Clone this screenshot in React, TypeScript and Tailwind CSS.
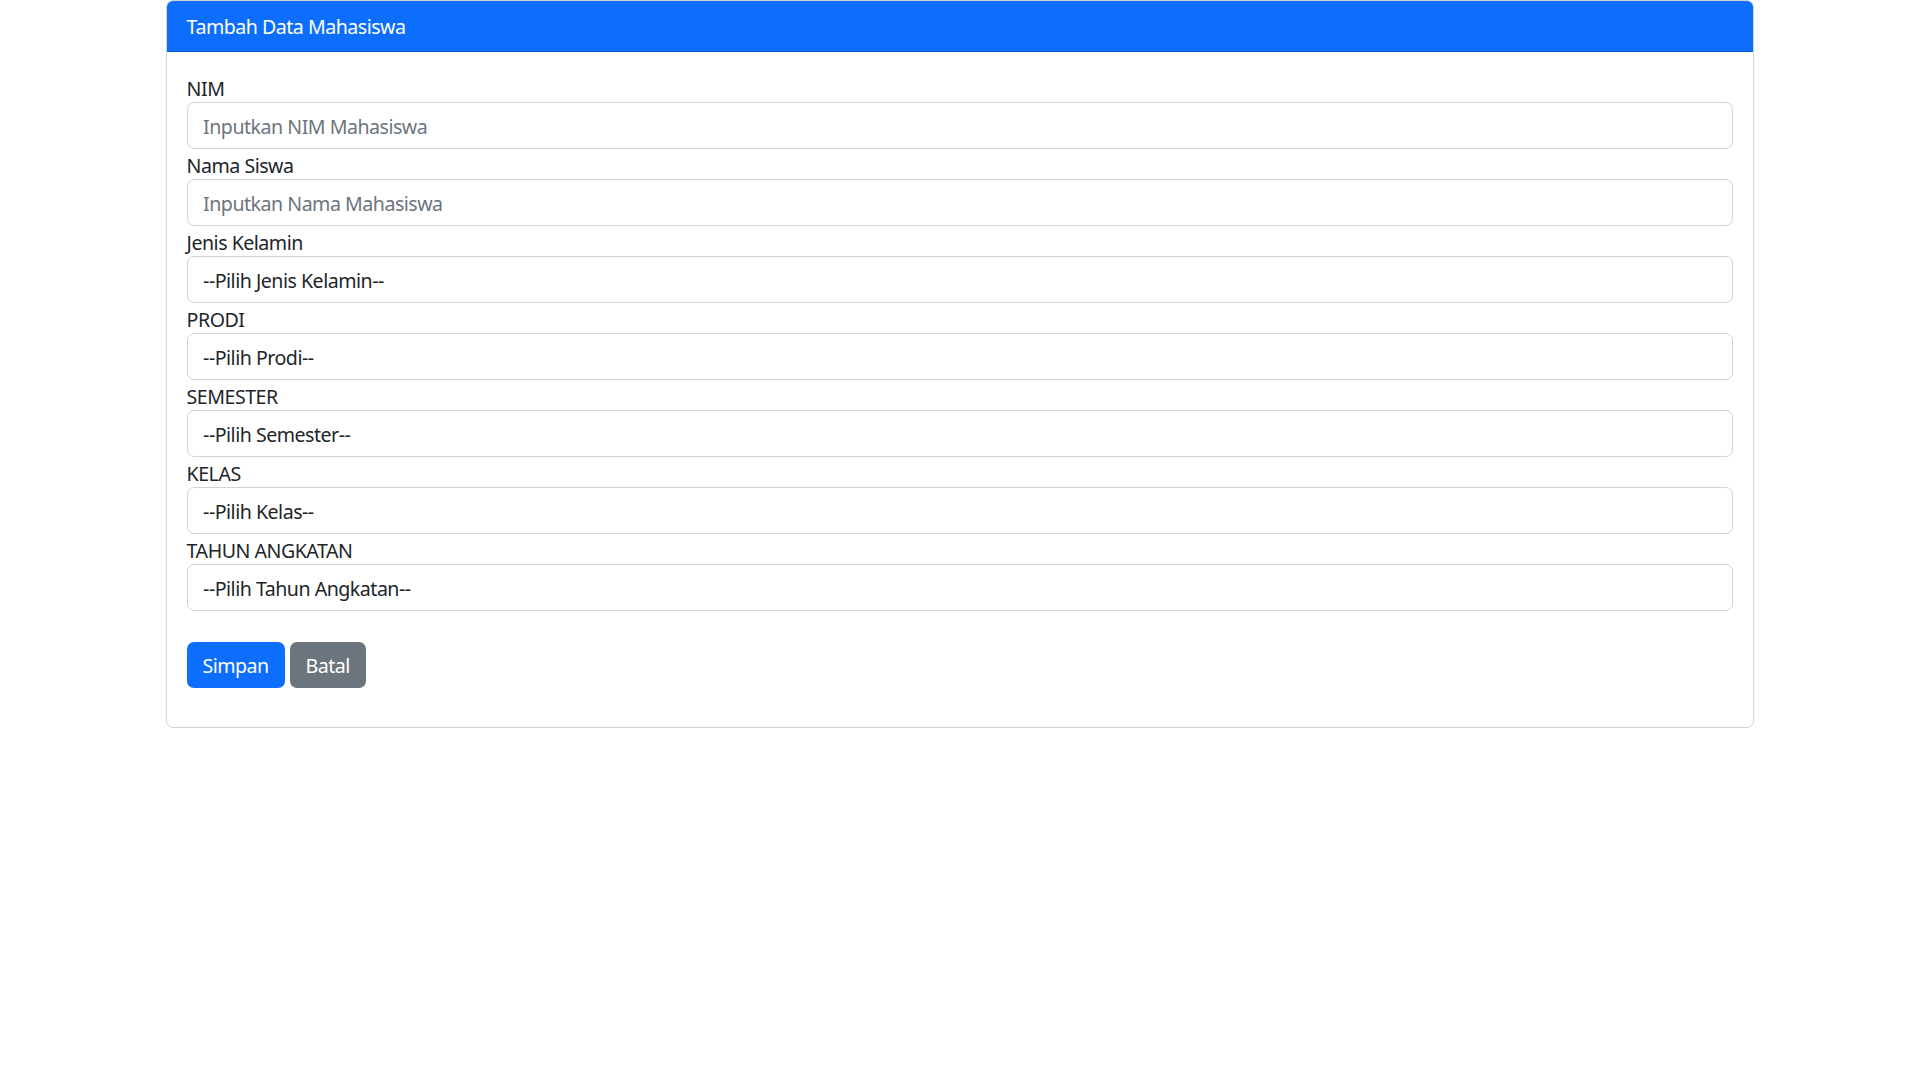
import React from "react";

const fields = [
  { label: "NIM", value: "Inputkan NIM Mahasiswa", placeholder: true },
  { label: "Nama Siswa", value: "Inputkan Nama Mahasiswa", placeholder: true },
  { label: "Jenis Kelamin", value: "--Pilih Jenis Kelamin--", placeholder: false },
  { label: "PRODI", value: "--Pilih Prodi--", placeholder: false },
  { label: "SEMESTER", value: "--Pilih Semester--", placeholder: false },
  { label: "KELAS", value: "--Pilih Kelas--", placeholder: false },
  { label: "TAHUN ANGKATAN", value: "--Pilih Tahun Angkatan--", placeholder: false },
];

export default function App() {
  return (
    <div
      className="min-h-screen w-full bg-white text-[#212529] text-[19.6px] tracking-[-0.5px]"
      style={{ fontFamily: '"Noto Sans", "Open Sans", sans-serif' }}
    >
      <div className="mx-auto w-[1588px] border border-[#d3d4d5] rounded-[7px] bg-white">
        <div className="h-[51px] bg-[#0d6efd] text-white rounded-t-[6px] border-b border-[#0b5bd0] px-[19.6px] pt-[2px] flex items-center leading-[29.4px]">
          Tambah Data Mahasiswa
        </div>
        <div className="p-[19.6px]">
          <form className="mb-[19.6px]">
            {fields.map((f) => (
              <div key={f.label}>
                <div className="h-[30.5px] leading-[29.4px] pt-[2px]">{f.label}</div>
                <div
                  className={
                    "h-[46.5px] border border-[#ced4da] rounded-[7px] px-[15.5px] pt-[2px] flex items-center leading-[29.4px] " +
                    (f.placeholder ? "text-[#6c757d]" : "text-[#212529]")
                  }
                >
                  {f.value}
                </div>
              </div>
            ))}
            <div className="mt-[31px] flex gap-[5px]">
              <button
                type="button"
                className="h-[46.5px] w-[98px] rounded-[7px] bg-[#0d6efd] text-white leading-[29.4px] pt-[2px] flex items-center justify-center"
              >
                Simpan
              </button>
              <button
                type="button"
                className="h-[46.5px] w-[76px] rounded-[7px] bg-[#6c757d] text-white leading-[29.4px] pt-[2px] flex items-center justify-center"
              >
                Batal
              </button>
            </div>
          </form>
        </div>
      </div>
    </div>
  );
}
